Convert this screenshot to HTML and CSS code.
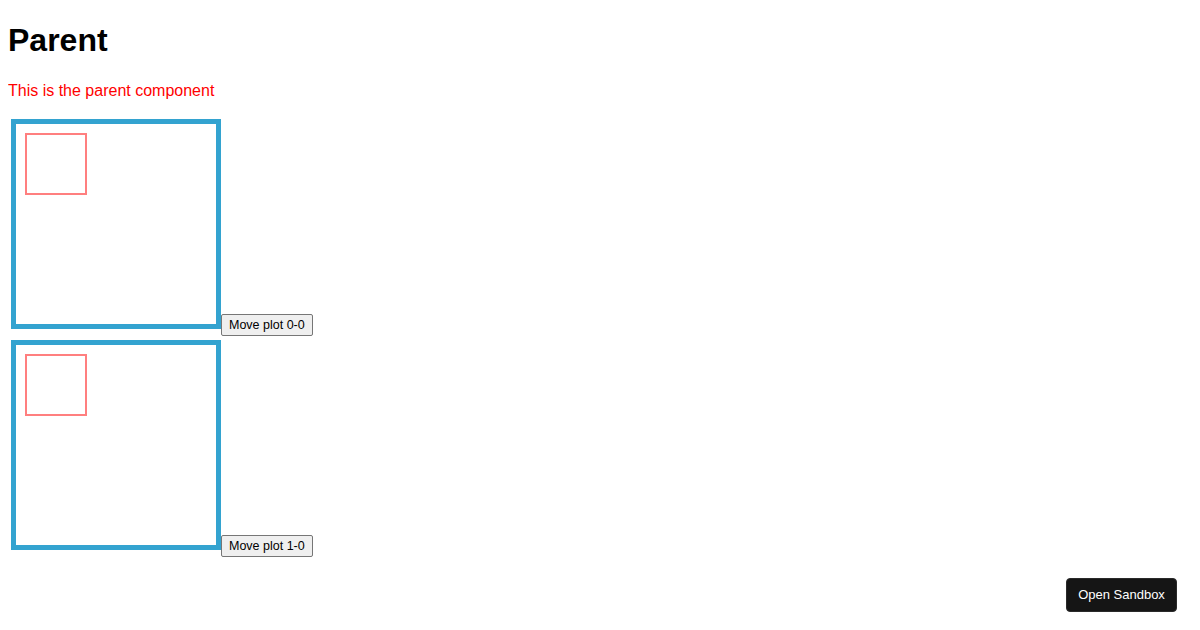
FILE: index.html
```html
<!DOCTYPE html>
<html lang="en">
<head>
  <meta charset="UTF-8" />
  <title>Parent</title>
  <link rel="stylesheet" href="styles.css">
</head>
<body>
  <h1>Parent</h1>
  <p class="intro">This is the parent component</p>

  <div class="plots">
    <div class="plot-row">
      <div class="plot"><div class="marker"></div></div><button class="move-btn">Move plot 0-0</button>
    </div>
    <div class="plot-row">
      <div class="plot"><div class="marker"></div></div><button class="move-btn">Move plot 1-0</button>
    </div>
  </div>

  <button class="sandbox-btn">Open Sandbox</button>
</body>
</html>
```

FILE: styles.css
```css
body {
  font-family: "Liberation Sans", Arial, sans-serif;
  margin: 8px;
  background: #ffffff;
}

h1 {
  font-size: 32px;
  font-weight: bold;
  margin: 14.4px 0 22.4px;
}

.intro {
  color: #ff0000;
  font-size: 16px;
  margin: 16px 0;
}

.plot {
  display: inline-block;
  width: 200px;
  height: 200px;
  border: 5px solid #33a3d0;
  margin: 3px 0 0 3px;
  vertical-align: baseline;
}

.plot-row + .plot-row .plot {
  margin-top: 4px;
}

.marker {
  width: 58px;
  height: 58px;
  border: 2px solid rgba(255, 0, 0, 0.5);
  margin: 9px 0 0 9px;
}

.move-btn {
  font-family: "Liberation Sans", Arial, sans-serif;
  font-size: 12.5px;
  padding: 3px 7px 3px;
  background: #efefef;
  border: 1px solid #767676;
  border-radius: 2px;
  color: #000;
}

.sandbox-btn {
  position: fixed;
  right: 23px;
  bottom: 18px;
  width: 111px;
  height: 34px;
  background: #151515;
  color: #ffffff;
  border: 1px solid #2a2a2a;
  border-radius: 4px;
  font-family: "Liberation Sans", Arial, sans-serif;
  font-size: 13px;
  padding: 0 0 1px;
}
```
